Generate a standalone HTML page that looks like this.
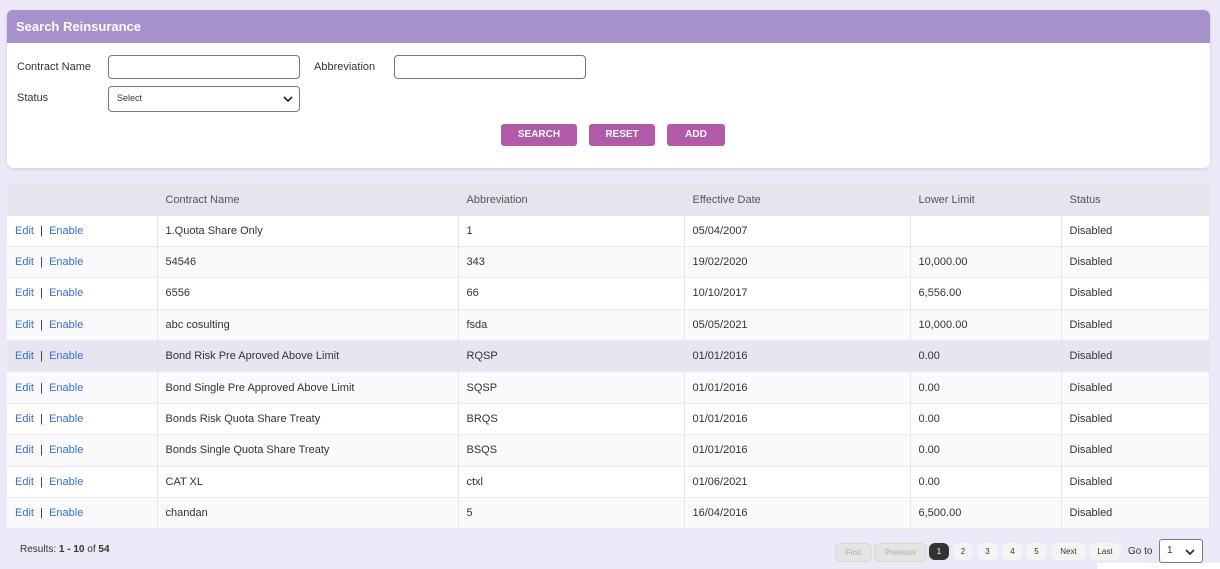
<!DOCTYPE html><html><head><style>
body{margin:0;width:1220px;height:569px;background:#ede8f7;font-family:"Liberation Sans",sans-serif;font-size:11px;color:#333;position:relative;overflow:hidden}
.card{position:absolute;left:7px;top:10px;width:1203px;height:158px;background:#fff;border-radius:6px;box-shadow:0 1px 3px rgba(0,0,0,.12);overflow:hidden}
.hd{height:33px;background:#a791ca;color:#fff;font-weight:bold;font-size:13px;line-height:33px;padding-left:9px}
.lbl{position:absolute;font-size:11px;color:#333}
.inp{position:absolute;width:190px;height:22px;border:1px solid #777;border-radius:4px;background:#fff}
.btn{position:absolute;top:114px;height:22px;background:#b05aa8;color:#fff;font-size:10px;font-weight:bold;text-align:center;line-height:22px;border-radius:3px}
table{position:absolute;left:7px;top:185px;width:1203px;border-collapse:collapse;table-layout:fixed}
td,th{height:31.4px;padding:0 0 0 8px;text-align:left;font-weight:normal;border-right:1px solid #e6e4ee;border-bottom:1px solid #ecebf2;font-size:11px;box-sizing:border-box}
th{background:#e6e4ee;color:#555;height:30px}
tr{background:#fff}tr.alt{background:#fafafd}tr.hl{background:#e8e4f0}
a{color:#3a6fd0;text-decoration:none}
.pg{position:absolute;top:543px;height:17px;border-radius:6px;background:#f4f4f4;font-size:8px;line-height:17px;text-align:center;color:#333}
</style></head><body>
<div class="card"><div class="hd">Search Reinsurance</div>
<div class="lbl" style="left:10px;top:51px">Contract Name</div>
<div class="inp" style="left:101px;top:45px"></div>
<div class="lbl" style="left:307px;top:51px">Abbreviation</div>
<div class="inp" style="left:387px;top:45px"></div>
<div class="lbl" style="left:10px;top:82px">Status</div>
<div class="inp" style="left:101px;top:76px;height:24px"><span style="position:absolute;left:8px;top:6px;font-size:9px">Select</span><svg style="position:absolute;right:6px;top:8px" width="10" height="8"><path d="M1 2l4 4 4-4" stroke="#222" stroke-width="1.6" fill="none"/></svg></div>
<div class="btn" style="left:494px;width:76px">SEARCH</div>
<div class="btn" style="left:582px;width:66px">RESET</div>
<div class="btn" style="left:660px;width:58px">ADD</div>
</div>
<table>
<colgroup><col style="width:150px"><col style="width:301px"><col style="width:226px"><col style="width:226px"><col style="width:151px"><col></colgroup>
<tr><th></th><th>Contract Name</th><th>Abbreviation</th><th>Effective Date</th><th>Lower Limit</th><th style="border-right:0">Status</th></tr>
<tr><td><a>Edit</a> &nbsp;| &nbsp;<a>Enable</a></td><td>1.Quota Share Only</td><td>1</td><td>05/04/2007</td><td></td><td>Disabled</td></tr>
<tr class="alt"><td><a>Edit</a> &nbsp;| &nbsp;<a>Enable</a></td><td>54546</td><td>343</td><td>19/02/2020</td><td>10,000.00</td><td>Disabled</td></tr>
<tr><td><a>Edit</a> &nbsp;| &nbsp;<a>Enable</a></td><td>6556</td><td>66</td><td>10/10/2017</td><td>6,556.00</td><td>Disabled</td></tr>
<tr class="alt"><td><a>Edit</a> &nbsp;| &nbsp;<a>Enable</a></td><td>abc cosulting</td><td>fsda</td><td>05/05/2021</td><td>10,000.00</td><td>Disabled</td></tr>
<tr class="hl"><td><a>Edit</a> &nbsp;| &nbsp;<a>Enable</a></td><td>Bond Risk Pre Aproved Above Limit</td><td>RQSP</td><td>01/01/2016</td><td>0.00</td><td>Disabled</td></tr>
<tr class="alt"><td><a>Edit</a> &nbsp;| &nbsp;<a>Enable</a></td><td>Bond Single Pre Approved Above Limit</td><td>SQSP</td><td>01/01/2016</td><td>0.00</td><td>Disabled</td></tr>
<tr><td><a>Edit</a> &nbsp;| &nbsp;<a>Enable</a></td><td>Bonds Risk Quota Share Treaty</td><td>BRQS</td><td>01/01/2016</td><td>0.00</td><td>Disabled</td></tr>
<tr class="alt"><td><a>Edit</a> &nbsp;| &nbsp;<a>Enable</a></td><td>Bonds Single Quota Share Treaty</td><td>BSQS</td><td>01/01/2016</td><td>0.00</td><td>Disabled</td></tr>
<tr><td><a>Edit</a> &nbsp;| &nbsp;<a>Enable</a></td><td>CAT XL</td><td>ctxl</td><td>01/06/2021</td><td>0.00</td><td>Disabled</td></tr>
<tr class="alt"><td><a>Edit</a> &nbsp;| &nbsp;<a>Enable</a></td><td>chandan</td><td>5</td><td>16/04/2016</td><td>6,500.00</td><td>Disabled</td></tr>
</table>
<div style="position:absolute;left:20px;top:544px;font-size:10px">Results: <b>1 - 10</b> of <b>54</b></div>
<div class="pg" style="left:835px;width:35px;background:#e4e4e4;color:#aaa;border:1px solid #d8d8d8">First</div>
<div class="pg" style="left:874px;width:51px;background:#e4e4e4;color:#aaa;border:1px solid #d8d8d8">Previous</div>
<div class="pg" style="left:929px;width:20px;background:#333;color:#fff">1</div>
<div class="pg" style="left:953px;width:20px">2</div>
<div class="pg" style="left:977px;width:21px">3</div>
<div class="pg" style="left:1002px;width:21px">4</div>
<div class="pg" style="left:1026px;width:21px">5</div>
<div class="pg" style="left:1051px;width:35px">Next</div>
<div class="pg" style="left:1089px;width:32px">Last</div>
<div style="position:absolute;left:1128px;top:546px;font-size:10px">Go to</div>
<div style="position:absolute;left:1159px;top:539px;width:42px;height:22px;border:1px solid #777;border-radius:3px;background:#fff"><span style="position:absolute;left:7px;top:5px;font-size:10px">1</span><svg style="position:absolute;right:7px;top:8px" width="10" height="8"><path d="M1 2l4 4 4-4" stroke="#222" stroke-width="1.6" fill="none"/></svg></div>
<div style="position:absolute;left:1097px;top:563px;width:123px;height:6px;background:#fff"></div>
</body></html>
